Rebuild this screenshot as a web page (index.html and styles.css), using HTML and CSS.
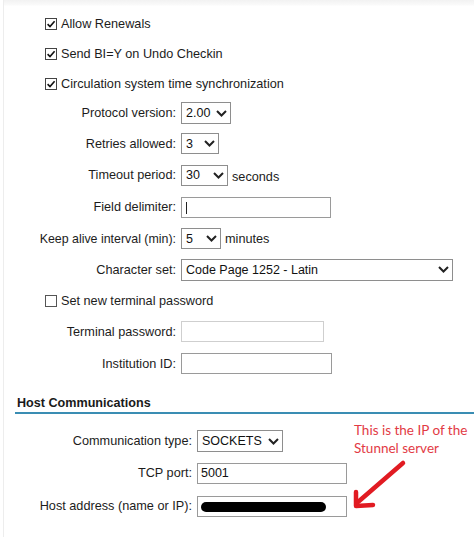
FILE: index.html
```html
<!DOCTYPE html>
<html>
<head>
<meta charset="utf-8">
<link rel="stylesheet" href="styles.css">
</head>
<body>
<div class="page">
  <div class="form form-top">
    <div class="check-row">
      <svg class="cb" width="12" height="12" viewBox="0 0 12 12"><rect x="0.5" y="0.5" width="11" height="11" fill="#fff" stroke="#444"/><path d="M2.6 6.1 L5 8.6 L9.6 3.2" fill="none" stroke="#111" stroke-width="1.6"/></svg>
      <span>Allow Renewals</span>
    </div>
    <div class="check-row">
      <svg class="cb" width="12" height="12" viewBox="0 0 12 12"><rect x="0.5" y="0.5" width="11" height="11" fill="#fff" stroke="#444"/><path d="M2.6 6.1 L5 8.6 L9.6 3.2" fill="none" stroke="#111" stroke-width="1.6"/></svg>
      <span>Send BI=Y on Undo Checkin</span>
    </div>
    <div class="check-row">
      <svg class="cb" width="12" height="12" viewBox="0 0 12 12"><rect x="0.5" y="0.5" width="11" height="11" fill="#fff" stroke="#444"/><path d="M2.6 6.1 L5 8.6 L9.6 3.2" fill="none" stroke="#111" stroke-width="1.6"/></svg>
      <span>Circulation system time synchronization</span>
    </div>

    <div class="label">Protocol version:</div>
    <div class="field">
      <div class="select w-protocol"><span>2.00</span><svg class="chev" width="11" height="7" viewBox="0 0 11 7"><path d="M1 1 L5.5 5.5 L10 1" fill="none" stroke="#222" stroke-width="2"/></svg></div>
    </div>

    <div class="label">Retries allowed:</div>
    <div class="field">
      <div class="select w-retries"><span>3</span><svg class="chev" width="11" height="7" viewBox="0 0 11 7"><path d="M1 1 L5.5 5.5 L10 1" fill="none" stroke="#222" stroke-width="2"/></svg></div>
    </div>

    <div class="label">Timeout period:</div>
    <div class="field">
      <div class="select w-timeout"><span>30</span><svg class="chev" width="11" height="7" viewBox="0 0 11 7"><path d="M1 1 L5.5 5.5 L10 1" fill="none" stroke="#222" stroke-width="2"/></svg></div>
      <span class="unit unit-seconds">seconds</span>
    </div>

    <div class="label">Field delimiter:</div>
    <div class="field">
      <div class="input w-delim"><span class="caret"></span></div>
    </div>

    <div class="label label-keep">Keep alive interval (min):</div>
    <div class="field">
      <div class="select w-keep"><span>5</span><svg class="chev" width="11" height="7" viewBox="0 0 11 7"><path d="M1 1 L5.5 5.5 L10 1" fill="none" stroke="#222" stroke-width="2"/></svg></div>
      <span class="unit">minutes</span>
    </div>

    <div class="label">Character set:</div>
    <div class="field">
      <div class="select w-charset"><span>Code Page 1252 - Latin</span><svg class="chev" width="11" height="7" viewBox="0 0 11 7"><path d="M1 1 L5.5 5.5 L10 1" fill="none" stroke="#222" stroke-width="2"/></svg></div>
    </div>

    <div class="check-row">
      <svg class="cb" width="12" height="12" viewBox="0 0 12 12"><rect x="0.5" y="0.5" width="11" height="11" fill="#fff" stroke="#555"/></svg>
      <span>Set new terminal password</span>
    </div>

    <div class="label">Terminal password:</div>
    <div class="field">
      <div class="input input-disabled w-termpw"></div>
    </div>

    <div class="label">Institution ID:</div>
    <div class="field">
      <div class="input w-inst"></div>
    </div>
  </div>

  <div class="section-head"><span>Host Communications</span></div>

  <div class="host">
    <div class="form form-host">
      <div class="label">Communication type:</div>
      <div class="field">
        <div class="select w-comm"><span>SOCKETS</span><svg class="chev" width="11" height="7" viewBox="0 0 11 7"><path d="M1 1 L5.5 5.5 L10 1" fill="none" stroke="#222" stroke-width="2"/></svg></div>
      </div>

      <div class="label">TCP port:</div>
      <div class="field">
        <div class="input w-host"><span>5001</span></div>
      </div>

      <div class="label">Host address (name or IP):</div>
      <div class="field">
        <div class="input w-host"><span class="redacted"></span></div>
      </div>
    </div>

    <div class="note">This is the IP of the<br>Stunnel server</div>
    <svg class="arrow" width="70" height="60" viewBox="0 0 70 60">
      <path d="M57 6 L12 45" fill="none" stroke="#e11b22" stroke-width="4.5" stroke-linecap="round"/>
      <path d="M10 35 L10 49 L27 48" fill="none" stroke="#e11b22" stroke-width="4.5" stroke-linecap="round" stroke-linejoin="round"/>
    </svg>
  </div>
</div>
</body>
</html>
```

FILE: styles.css
```css
html, body {
  margin: 0;
  padding: 0;
  background: #fff;
}

body {
  font-family: "Liberation Sans", Arial, sans-serif;
  font-size: 12.7px;
  color: #1c1c1c;
}

.page {
  position: relative;
  width: 471px;
  height: 537px;
  box-sizing: border-box;
  padding-top: 9px;
  border-left: 1px solid #ededed;
  margin-left: 3px;
  overflow: hidden;
  background: linear-gradient(#f2f2f2, #fafafa 5px, #fff 6px);
}

.form {
  display: grid;
  column-gap: 5px;
  align-items: center;
}

.form-top {
  grid-template-columns: 172px auto;
  grid-template-rows: 30px 30px 29px 30px 31px 32px 32px 31px 31px 31px 31px 33px;
}

.check-row {
  grid-column: 1 / -1;
  display: flex;
  align-items: center;
  gap: 4px;
  padding-left: 41px;
}

.cb {
  display: block;
  flex: none;
}

.label {
  text-align: right;
  white-space: nowrap;
}

.label-keep {
  font-size: 12.4px;
}

.field {
  display: flex;
  align-items: center;
  gap: 5px;
}

.select,
.input {
  box-sizing: border-box;
  display: flex;
  align-items: center;
  background: #fff;
  font-size: 12.5px;
  color: #111;
  white-space: nowrap;
}

.select {
  height: 22px;
  border: 1px solid #8e8e8e;
  justify-content: space-between;
  padding: 0 3px 0 4px;
}

.input {
  height: 21px;
  border: 1px solid #9a9a9a;
  padding: 0 3px;
}

.input-disabled {
  border-color: #cfcfcf;
}

.chev {
  display: block;
  flex: none;
}

.unit {
  margin-left: -1px;
}

.unit-seconds {
  padding-top: 3px;
}

.caret {
  display: block;
  width: 1px;
  height: 12px;
  background: #222;
  margin-left: 1px;
  margin-top: 2px;
}

.w-protocol { width: 50px; }
.w-retries { width: 38px; height: 21px; }
.w-timeout { width: 47px; height: 21px; }
.w-keep { width: 40px; height: 21px; }
.w-charset { width: 272px; height: 22px; }
.w-delim { width: 150px; }
.w-termpw { width: 143px; }
.w-inst { width: 151px; }
.w-comm { width: 86px; height: 22px; }
.w-host { width: 150px; }

.section-head {
  margin: 16px 0 0 11px;
  padding: 0 0 1px 2px;
  border-bottom: 2px solid #3a8db3;
  font-weight: bold;
  font-size: 12.6px;
  line-height: 15px;
  color: #1a1a1a;
}

.host {
  position: relative;
}

.form-host {
  grid-template-columns: 188px auto;
  grid-template-rows: 32px 32px 34px;
  padding-top: 11px;
}

.redacted {
  display: block;
  width: 125px;
  height: 10px;
  border-radius: 5px;
  background: #000;
  margin-top: 1px;
}

.note {
  position: absolute;
  left: 350px;
  top: 7px;
  font-family: Lato, "Open Sans", sans-serif;
  font-size: 13.5px;
  line-height: 18px;
  color: #e23a44;
}

.arrow {
  position: absolute;
  left: 342px;
  top: 43px;
}
```
